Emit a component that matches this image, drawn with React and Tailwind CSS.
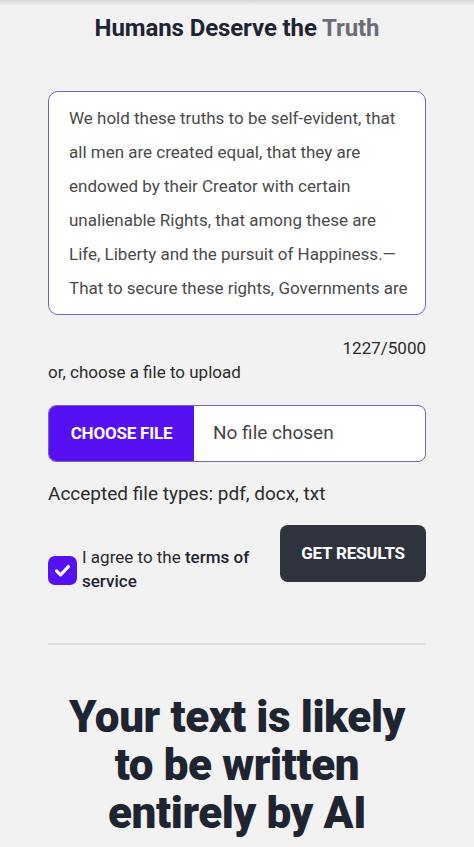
import React, { useState } from 'react';

const passage =
  'We hold these truths to be self-evident, that all men are created equal, that they are endowed by their Creator with certain unalienable Rights, that among these are Life, Liberty and the pursuit of Happiness.— That to secure these rights, Governments are instituted among Men, deriving their just powers from the consent of the governed.';

export default function App() {
  const [agreed, setAgreed] = useState(true);

  return (
    <main
      className="min-h-[847px] bg-[#f2f2f2] text-[#1f2432]"
      style={{ fontFamily: 'Roboto, "Liberation Sans", sans-serif' }}
    >
      <div className="h-[6px] bg-gradient-to-b from-[#d6d6d6] to-[#f2f2f2]" />
      <div className="mx-auto w-[378px] flex flex-col">
        <h1 className="mt-[7px] text-center text-[24px] font-bold leading-[30px] tracking-[-0.1px]">
          Humans Deserve the <span className="text-[#6b6d76]">Truth</span>
        </h1>

        <div className="mt-[48px] h-[224px] overflow-hidden rounded-[10px] border border-[#7a62b8] bg-white pl-[20px] pr-[14px] pt-[9px]">
          <p className="text-[17px] leading-[34px] text-[#4a4a4a]">{passage}</p>
        </div>

        <div className="mt-[21px] text-right text-[17px] leading-[24px] text-[#2b2b2b]">1227/5000</div>
        <div className="text-[17px] leading-[24px] text-[#2b2b2b]">or, choose a file to upload</div>

        <div className="mt-[21px] flex h-[57px] overflow-hidden rounded-[8px] border border-[#7a62b8] bg-white">
          <button
            type="button"
            className="w-[145px] bg-[#5511f2] text-[17px] font-bold tracking-[-0.2px] text-white"
          >
            CHOOSE FILE
          </button>
          <span className="flex items-center pl-[19px] text-[19px] text-[#444]">No file chosen</span>
        </div>

        <div className="mt-[19px] text-[19px] leading-[26px] text-[#2b2b2b]">Accepted file types: pdf, docx, txt</div>

        <div className="mt-[18px] flex items-start justify-between">
          <label className="mt-[20px] flex items-start gap-[5px]">
            <button
              type="button"
              onClick={() => setAgreed(!agreed)}
              className="mt-[11px] flex h-[29px] w-[29px] shrink-0 items-center justify-center rounded-[7px] bg-[#5511f2]"
            >
              {agreed ? (
                <svg width="19" height="19" viewBox="0 0 24 24" fill="none" stroke="white" strokeWidth="4" strokeLinecap="round" strokeLinejoin="round">
                  <path d="M4.5 12.5l5 5L19.5 7" />
                </svg>
              ) : null}
            </button>
            <span className="w-[172px] text-[17px] leading-[24px] text-[#2b2b2b]">
              I agree to the <span className="font-medium text-[#1f2432]">terms of service</span>
            </span>
          </label>
          <button
            type="button"
            className="h-[57px] w-[146px] rounded-[8px] bg-[#30323d] text-[17px] font-bold tracking-[-0.2px] text-white"
          >
            GET RESULTS
          </button>
        </div>

        <hr className="mt-[50px] border-0 border-t-2 border-[#dedede]" />

        <h2 className="mt-[48px] px-[10px] text-center text-[44px] font-black leading-[48px] tracking-[-0.4px] text-[#1f2432]">
          Your text is likely to be written entirely by AI
        </h2>
      </div>
    </main>
  );
}
